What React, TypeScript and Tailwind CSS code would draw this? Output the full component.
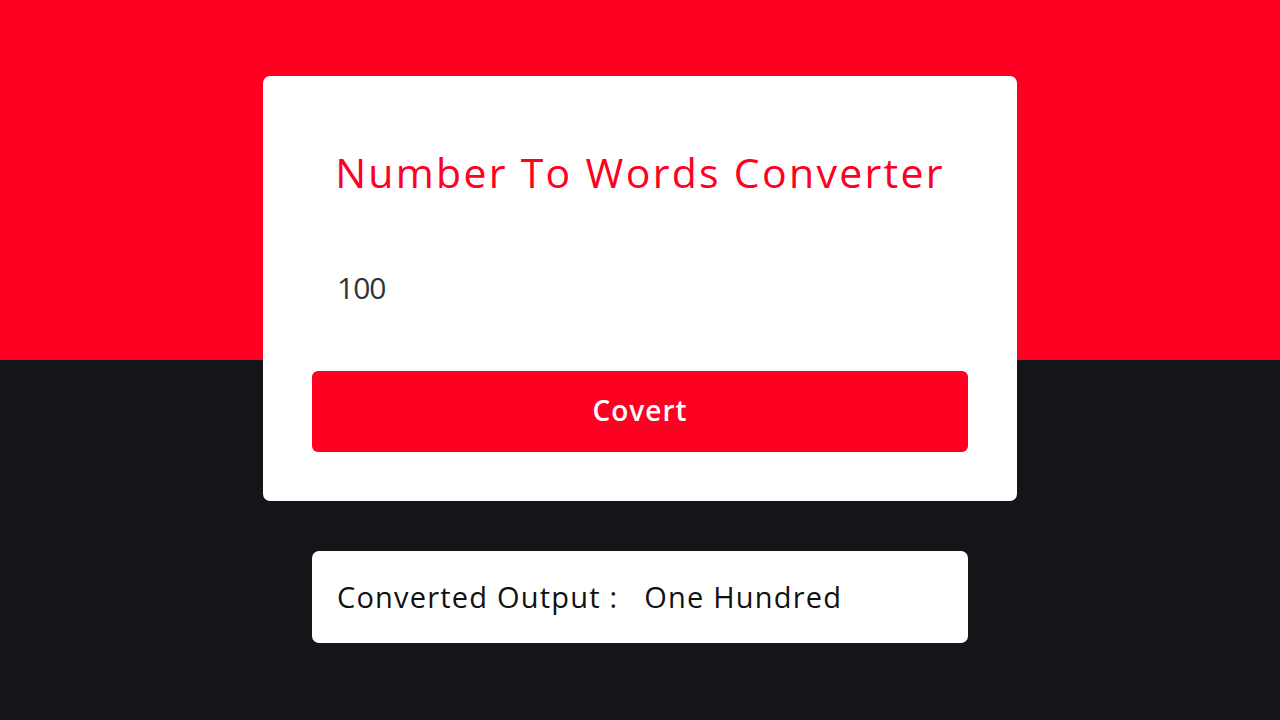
import React from "react";

export default function App() {
  return (
    <div
      className="min-h-[720px] w-full bg-[linear-gradient(#fe0021_0,#fe0021_360px,#141519_360px,#141519_100%)] flex flex-col items-center pt-[76px]"
      style={{ fontFamily: '"Open Sans", "Noto Sans", sans-serif' }}
    >
      <div className="w-[754px] h-[425px] bg-white rounded-[7px] px-[49px] pt-[66px] flex flex-col">
        <h1 className="text-center text-[41px] leading-[60px] tracking-[2.3px] text-[#fe0021] font-normal">
          Number To Words Converter
        </h1>
        <input
          type="text"
          defaultValue="100"
          className="mt-[55px] h-[60px] w-full px-[25px] text-[30px] tracking-[-1px] text-[#333333] outline-none bg-transparent"
        />
        <button className="mt-[54px] h-[81px] w-full rounded-[6px] bg-[#fe0021] text-white text-[28px] leading-none pb-[3px] tracking-[1px] font-semibold">
          Covert
        </button>
      </div>
      <div className="mt-[50px] w-[656px] h-[92px] bg-white rounded-[7px] px-[25px] flex items-center text-[29px] tracking-[1.2px] text-[#111111]">
        <span>Converted Output :</span>
        <span className="ml-[26px]">One Hundred</span>
      </div>
    </div>
  );
}
